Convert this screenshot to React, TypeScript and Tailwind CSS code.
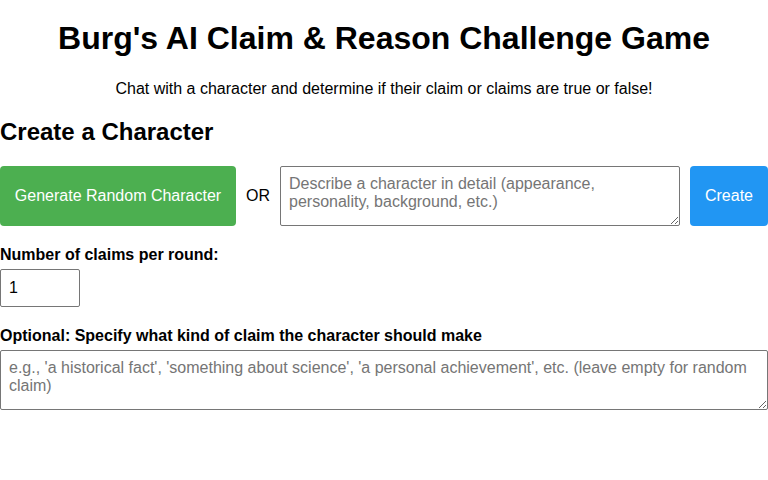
export default function App() {
  return (
    <div className="font-['Liberation_Sans',Arial,sans-serif] text-black bg-white min-h-screen">
      <h1 className="text-[32px] font-bold text-center pt-[14px]">
        Burg's AI Claim &amp; Reason Challenge Game
      </h1>
      <p className="text-base text-center mt-[15px]">
        Chat with a character and determine if their claim or claims are true or false!
      </p>
      <h2 className="text-2xl font-bold mt-[15px] mb-[18px]">Create a Character</h2>
      <div className="flex items-center gap-[10px]">
        <button className="h-[60px] w-[236px] shrink-0 rounded bg-[#4caf50] text-white text-base">
          Generate Random Character
        </button>
        <span className="text-base">OR</span>
        <textarea
          className="w-[400px] h-[60px] border border-[#767676] rounded-[2px] px-2 py-2 text-base leading-[18px] placeholder:text-[#757575]"
          placeholder="Describe a character in detail (appearance, personality, background, etc.)"
        />
        <button className="h-[60px] flex-1 rounded bg-[#2196f3] text-white text-base">Create</button>
      </div>
      <label className="block font-bold text-base mt-[17px] mb-[2px]">Number of claims per round:</label>
      <input
        type="number"
        defaultValue={1}
        className="block w-[80px] h-[38px] border border-[#767676] rounded-[2px] px-2 text-base"
      />
      <label className="block font-bold text-base mt-[17px] mb-[2px]">
        Optional: Specify what kind of claim the character should make
      </label>
      <textarea
        className="block w-full h-[60px] border border-[#767676] rounded-[2px] px-2 py-2 text-base leading-[18px] placeholder:text-[#757575]"
        placeholder="e.g., 'a historical fact', 'something about science', 'a personal achievement', etc. (leave empty for random claim)"
      />
    </div>
  );
}
